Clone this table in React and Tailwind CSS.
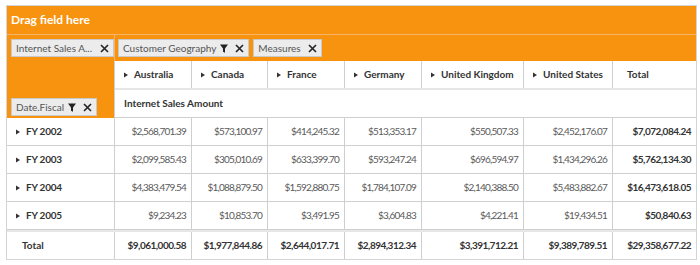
import React from "react";

const cols = ["Australia", "Canada", "France", "Germany", "United Kingdom", "United States"];
const widths = ["w-[77px]", "w-[76px]", "w-[77px]", "w-[77px]", "w-[102px]", "w-[89px]", "w-[83px]"];
const rows = [
  ["FY 2002", ["$2,568,701.39", "$573,100.97", "$414,245.32", "$513,353.17", "$550,507.33", "$2,452,176.07", "$7,072,084.24"]],
  ["FY 2003", ["$2,099,585.43", "$305,010.69", "$633,399.70", "$593,247.24", "$696,594.97", "$1,434,296.26", "$5,762,134.30"]],
  ["FY 2004", ["$4,383,479.54", "$1,088,879.50", "$1,592,880.75", "$1,784,107.09", "$2,140,388.50", "$5,483,882.67", "$16,473,618.05"]],
  ["FY 2005", ["$9,234.23", "$10,853.70", "$3,491.95", "$3,604.83", "$4,221.41", "$19,434.51", "$50,840.63"]],
];
const totals = ["$9,061,000.58", "$1,977,844.86", "$2,644,017.71", "$2,894,312.34", "$3,391,712.21", "$9,389,789.51", "$29,358,677.22"];

function Tri() {
  return (
    <svg width="4" height="6" viewBox="0 0 4 6" className="shrink-0">
      <path d="M0 0.5 L4 3 L0 5.5 Z" fill="#333" />
    </svg>
  );
}

function Close() {
  return (
    <svg width="9" height="9" viewBox="0 0 9 9" className="shrink-0">
      <path d="M1 1 L8 8 M8 1 L1 8" stroke="#222" strokeWidth="1.6" />
    </svg>
  );
}

function Funnel() {
  return (
    <svg width="8" height="9" viewBox="0 0 8 9" className="shrink-0">
      <path d="M0 0.5 H8 L5 4.5 V8.8 L3 7.8 V4.5 Z" fill="#222" />
    </svg>
  );
}

function Pill({ label, filter, xGap = "ml-[7px]" }) {
  return (
    <div className="flex h-[18px] items-center whitespace-nowrap border border-[#c9c9c9] bg-[#ececec] pl-[4px] pr-[4px] text-[10px] text-[#555]">
      <span className="leading-none">{label}</span>
      {filter && <span className="ml-[4px] flex"><Funnel /></span>}
      <span className={`${xGap} flex`}><Close /></span>
    </div>
  );
}

export default function App() {
  return (
    <div className="h-[265px] w-[700px] bg-white pl-[6px] pt-[5px]" style={{ fontFamily: "Lato, 'Noto Sans', sans-serif" }}>
      <div className="w-[691px] border border-[#d4d4d4]">
        <div className="flex h-[28px] items-center bg-[#f8930f] px-[4px] text-[12px] font-bold text-white">Drag field here</div>
        <div className="h-px bg-[#f6b36a]" />
        <div className="flex h-[26px] bg-[#f8930f]">
          <div className="flex w-[108px] items-center border-r border-[#f6b36a] pl-[4px]">
            <Pill label="Internet Sales A..." xGap="ml-[8px]" />
          </div>
          <div className="flex items-center gap-[4px] pl-[3px]">
            <Pill label="Customer Geography" filter />
            <Pill label="Measures" />
          </div>
        </div>
        <div className="flex">
          <div className="flex h-[57px] w-[108px] items-end border-r border-[#cfcfcf] bg-[#f8930f] pb-[2px] pl-[4px]">
            <Pill label="Date.Fiscal" filter />
          </div>
          <div className="flex flex-col">
            <div className="flex h-[29px] border-b-2 border-[#e6e6e6] text-[10px] font-bold text-[#333]">
              {cols.map((c, i) => (
                <div key={c} className={`flex items-center gap-[6px] border-r border-[#cfcfcf] pl-[9px] ${widths[i]}`}>
                  <Tri />
                  <span>{c}</span>
                </div>
              ))}
              <div className={`flex items-center pl-[14px] ${widths[6]}`}>Total</div>
            </div>
            <div className="flex h-[28px] items-center border-b border-[#cfcfcf] pl-[9px] text-[10px] font-bold text-[#333]">
              Internet Sales Amount
            </div>
          </div>
        </div>
        {rows.map(([label, vals]) => (
          <div key={label} className="flex h-[28px] border-b border-[#cfcfcf] text-[10px]">
            <div className="flex w-[108px] items-center gap-[6px] border-r border-[#cfcfcf] pl-[9px] font-bold text-[#333]">
              <Tri />
              <span className="tracking-[-0.2px]">{label}</span>
            </div>
            {vals.map((v, i) => (
              <div
                key={i}
                className={`flex items-center justify-end whitespace-nowrap pr-[5px] ${widths[i]} ${i < 6 ? "border-r border-[#cfcfcf] tracking-[-0.8px] text-[#5a5a5a]" : "font-bold tracking-[-0.5px] text-[#333]"}`}
              >
                {v}
              </div>
            ))}
          </div>
        ))}
        <div className="flex h-[29px] border-t-2 border-[#e6e6e6] text-[10px] font-bold tracking-[-0.5px] text-[#333]">
          <div className="flex w-[108px] items-center border-r border-[#cfcfcf] pl-[15px] tracking-normal">Total</div>
          {totals.map((v, i) => (
            <div key={i} className={`flex items-center justify-end whitespace-nowrap pr-[5px] ${widths[i]} ${i < 6 ? "border-r border-[#cfcfcf]" : ""}`}>
              {v}
            </div>
          ))}
        </div>
      </div>
    </div>
  );
}
